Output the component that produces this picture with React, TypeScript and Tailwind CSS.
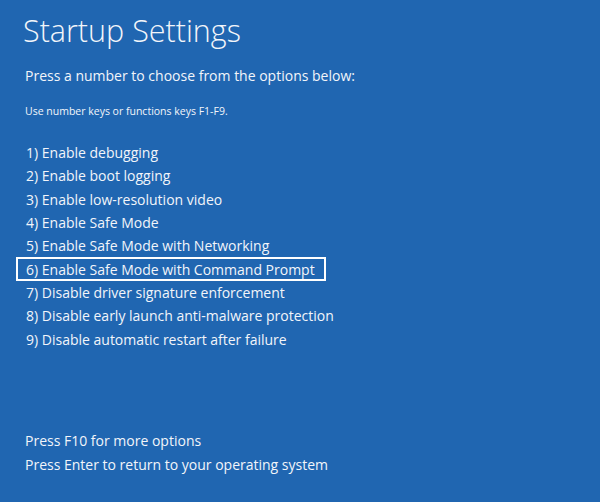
export default function App() {
  const items = [
    "1) Enable debugging",
    "2) Enable boot logging",
    "3) Enable low-resolution video",
    "4) Enable Safe Mode",
    "5) Enable Safe Mode with Networking",
    "6) Enable Safe Mode with Command Prompt",
    "7) Disable driver signature enforcement",
    "8) Disable early launch anti-malware protection",
    "9) Disable automatic restart after failure",
  ];
  return (
    <div
      className="w-[600px] h-[502px] bg-[#2066b1] text-[#f2f5fa] overflow-hidden flex flex-col"
      style={{ fontFamily: '"Open Sans", "Noto Sans", sans-serif' }}
    >
      <div className="pl-[23px] pt-[10px] text-[30.5px] font-light leading-[40px]">Startup Settings</div>
      <div className="pl-[25px] pt-[16px] text-[14px] leading-[20px]">
        Press a number to choose from the options below:
      </div>
      <div className="pl-[25px] pt-[17px] text-[10.5px] leading-[16px]">
        Use number keys or functions keys F1-F9.
      </div>
      <div className="pt-[22px] flex flex-col">
        {items.map((t, i) => (
          <div key={i} className="pl-[16px] h-[23.3px] flex items-center">
            <div
              className={
                "pl-[8px] pr-[9px] h-[24px] flex items-center text-[14px] border-2 " +
                (i === 5 ? "border-white" : "border-transparent")
              }
            >
              {t}
            </div>
          </div>
        ))}
      </div>
      <div className="mt-auto pb-[26px] pl-[25px] text-[14px] leading-[23.3px]">
        <div>Press F10 for more options</div>
        <div>Press Enter to return to your operating system</div>
      </div>
    </div>
  );
}
